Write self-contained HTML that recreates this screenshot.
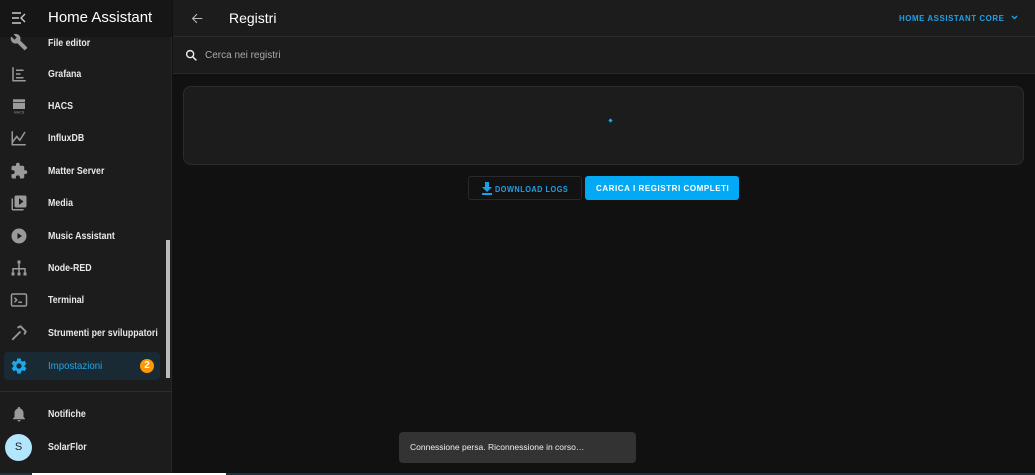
<!DOCTYPE html>
<html><head><meta charset="utf-8"><style>
*{box-sizing:border-box;margin:0;padding:0}
body{width:1035px;height:475px;overflow:hidden;background:#111;font-family:"Liberation Sans",sans-serif;position:relative;color:#e1e1e1}
.sb{position:absolute;left:0;top:0;width:172px;height:475px;background:#1c1c1c;border-right:1px solid #262626}
.sbh{position:absolute;left:0;top:0;width:172px;height:37px;background:#161616;}
.sbh .t{position:absolute;left:48px;top:9px;font-size:15px;color:#fff}
.it{position:absolute;left:0;width:165px;height:28px}
.it svg{position:absolute;left:10px;top:5px;width:18px;height:18px}
.it span{position:absolute;left:48px;top:8px;font-size:10.5px;font-weight:bold;color:#e8e8e8;white-space:nowrap;transform:scaleX(.84);transform-origin:left center}
.act{left:4px;width:156px;background:#1a2a35;border-radius:4px}
.act svg{left:6px}.act span{left:44px;color:#1ea7ea;font-weight:normal;transform:scaleX(.92)}
.badge{position:absolute;right:6px;top:7px;width:14px;height:14px;border-radius:50%;background:#ff9800;color:#fff;font-size:10px;text-align:center;line-height:14px;font-weight:bold}
.scroll{position:absolute;left:166px;top:240px;width:4px;height:138px;background:#bbb}
.div{position:absolute;left:0;top:391px;width:172px;height:1px;background:#2e2e2e}
.av{position:absolute;left:5px;top:434px;width:27px;height:27px;border-radius:50%;background:#b3e5fc;color:#222;font-size:11px;text-align:center;line-height:27px}
.hdr{position:absolute;left:173px;top:0;right:0;height:37px;background:#1c1c1c;border-bottom:1px solid #2a2a2a}
.srch{position:absolute;left:173px;top:37px;right:0;height:37px;background:#1c1c1c;border-bottom:1px solid #2a2a2a}
.card{position:absolute;left:183px;top:86px;width:841px;height:79px;background:#1c1c1c;border:1px solid #2c2c2c;border-radius:8px}
.btn{position:absolute;top:176px;height:24px;font-size:8.5px;font-weight:bold;letter-spacing:.6px;line-height:24px;border-radius:3px}
.sx{display:inline-block;transform-origin:left center}
.toast{position:absolute;left:399px;top:432px;width:237px;height:31px;background:#333;border-radius:4px;font-size:8.5px;color:#eee;line-height:31px;padding-left:11px}
</style></head><body>
<div class="sb">
<div class="sbh">
<svg style="position:absolute;left:12px;top:12px" width="14" height="12" viewBox="0 0 14 12"><path d="M0 1h9M0 6h7M0 11h9M13 2l-4 4 4 4" stroke="#ccc" stroke-width="1.4" fill="none"/></svg>
<div class="t">Home Assistant</div></div>
<div class="it" style="top:28px"><svg viewBox="0 0 24 24"><path fill="#9a9a9a" d="M22.7 19l-9.1-9.1c.9-2.3.4-5-1.5-6.9-2-2-5-2.4-7.4-1.3L9 6 6 9 1.6 4.7C.4 7.1.9 10.1 2.9 12.1c1.9 1.9 4.6 2.4 6.9 1.5l9.1 9.1c.4.4 1 .4 1.4 0l2.3-2.3c.5-.4.5-1.1.1-1.4z"/></svg><span style="top:9px">File editor</span></div>
<div class="it" style="top:60px"><svg viewBox="0 0 24 24"><path d="M4 3v18h17M8 7h10M8 12h6M8 17h10" stroke="#9a9a9a" stroke-width="2" fill="none"/></svg><span>Grafana</span></div>
<div class="it" style="top:92px"><svg viewBox="0 0 24 24"><path fill="#9a9a9a" d="M4 3h16v4H4zM4 8h16v8H4z"/><text x="12" y="22" font-size="5" fill="#9a9a9a" text-anchor="middle" font-family="Liberation Sans">HACS</text></svg><span>HACS</span></div>
<div class="it" style="top:124px"><svg viewBox="0 0 24 24"><path d="M3 3v18h18M3 18l6-8 4 5 7-11" stroke="#9a9a9a" stroke-width="2" fill="none"/></svg><span>InfluxDB</span></div>
<div class="it" style="top:157px"><svg viewBox="0 0 24 24"><path fill="#9a9a9a" d="M20.5 11H19V7c0-1.1-.9-2-2-2h-4V3.5a2.5 2.5 0 00-5 0V5H4c-1.1 0-2 .9-2 2v3.8h1.5a2.7 2.7 0 010 5.4H2V20c0 1.1.9 2 2 2h3.8v-1.5a2.7 2.7 0 015.4 0V22H17c1.1 0 2-.9 2-2v-4h1.5a2.5 2.5 0 000-5z"/></svg><span>Matter Server</span></div>
<div class="it" style="top:189px"><svg viewBox="0 0 24 24"><path fill="#9a9a9a" d="M4 6H2v14c0 1.1.9 2 2 2h14v-2H4zm16-4H8c-1.1 0-2 .9-2 2v12c0 1.1.9 2 2 2h12c1.1 0 2-.9 2-2V4c0-1.1-.9-2-2-2zm-8 12.5v-9l6 4.5z"/></svg><span>Media</span></div>
<div class="it" style="top:222px"><svg viewBox="0 0 24 24"><circle cx="12" cy="12" r="10" fill="#9a9a9a"/><path d="M10 8v8l6-4z" fill="#1c1c1c"/></svg><span>Music Assistant</span></div>
<div class="it" style="top:254px"><svg viewBox="0 0 24 24"><path fill="#9a9a9a" d="M10 2h4v4h-4zM2 18h4v4H2zM10 18h4v4h-4zM18 18h4v4h-4z"/><path d="M12 6v12M4 18v-5h16v5" stroke="#9a9a9a" stroke-width="2" fill="none"/></svg><span>Node-RED</span></div>
<div class="it" style="top:286px"><svg viewBox="0 0 24 24"><rect x="2" y="4" width="20" height="16" rx="2" stroke="#9a9a9a" stroke-width="2" fill="none"/><path d="M6 9l3 3-3 3M11 15h5" stroke="#9a9a9a" stroke-width="2" fill="none"/></svg><span>Terminal</span></div>
<div class="it" style="top:319px"><svg viewBox="0 0 24 24"><path d="M3 21l11-11M10 5l4-2 7 7-2 4" stroke="#9a9a9a" stroke-width="2.5" fill="none"/></svg><span>Strumenti per sviluppatori</span></div>
<div class="it act" style="top:352px"><svg viewBox="0 0 24 24"><path fill="#1ea7ea" d="M12 15.5A3.5 3.5 0 1112 8.5a3.5 3.5 0 010 7zm7.4-2.5c0-.3.1-.7.1-1s0-.7-.1-1l2.1-1.6c.2-.2.2-.4.1-.6l-2-3.5c-.1-.2-.4-.3-.6-.2l-2.5 1c-.5-.4-1.1-.7-1.7-1L14.5 2.4c0-.2-.2-.4-.5-.4h-4c-.3 0-.5.2-.5.4l-.4 2.7c-.6.2-1.1.6-1.7 1l-2.5-1c-.2-.1-.5 0-.6.2l-2 3.5c-.1.2-.1.5.1.6L4.6 11c0 .3-.1.7-.1 1s0 .7.1 1l-2.1 1.6c-.2.2-.2.4-.1.6l2 3.5c.1.2.4.3.6.2l2.5-1c.5.4 1.1.7 1.7 1l.4 2.7c0 .2.2.4.5.4h4c.3 0 .5-.2.5-.4l.4-2.7c.6-.2 1.1-.6 1.7-1l2.5 1c.2.1.5 0 .6-.2l2-3.5c.1-.2.1-.5-.1-.6z"/></svg><span>Impostazioni</span><div class="badge">2</div></div>
<div class="scroll"></div>
<div class="div"></div>
<div class="it" style="top:400px"><svg viewBox="0 0 24 24"><path fill="#9a9a9a" d="M12 22a2 2 0 002-2h-4a2 2 0 002 2zm6-6v-5c0-3.1-1.6-5.6-4.5-6.3V4a1.5 1.5 0 00-3 0v.7C7.6 5.4 6 7.9 6 11v5l-2 2v1h16v-1z"/></svg><span>Notifiche</span></div>
<div class="av">S</div>
<div class="it" style="top:433px"><span>SolarFlor</span></div>
</div>
<div class="hdr">
<svg style="position:absolute;left:18px;top:12px" width="13" height="13" viewBox="0 0 24 24"><path d="M21 12H4M11 4l-8 8 8 8" stroke="#bbb" stroke-width="2" fill="none"/></svg>
<div style="position:absolute;left:56px;top:10px;font-size:14px;color:#fff">Registri</div>
<div style="position:absolute;left:726px;top:13px;font-size:8.5px;font-weight:bold;letter-spacing:.6px;color:#1ea0e8;transform:scaleX(.93);transform-origin:left center;white-space:nowrap">HOME ASSISTANT CORE</div>
<svg style="position:absolute;right:17px;top:15px" width="7" height="5" viewBox="0 0 7 5"><path d="M1 1l2.5 2.5L6 1" stroke="#1ea0e8" stroke-width="1.4" fill="none"/></svg>
</div>
<div class="srch">
<svg style="position:absolute;left:12px;top:12px" width="13" height="13" viewBox="0 0 24 24"><circle cx="9.5" cy="9.5" r="6.5" stroke="#eee" stroke-width="2.6" fill="none"/><path d="M14.5 14.5L21 21" stroke="#eee" stroke-width="2.8"/></svg>
<div style="position:absolute;left:32px;top:13px;font-size:10px;color:#aaa">Cerca nei registri</div>
</div>
<div class="card"><div style="position:absolute;left:425px;top:32px;width:3px;height:3px;background:#1ea7ea;transform:rotate(45deg)"></div></div>
<div class="btn" style="left:468px;width:114px;border:1px solid #2a2a2a;background:#121212;color:#1ea0e8;padding-left:26px;white-space:nowrap"><span class="sx" style="transform:scaleX(.86)">DOWNLOAD LOGS</span>
<svg style="position:absolute;left:13px;top:5px" width="10" height="13" viewBox="0 0 10 13"><path d="M3 0h4v5h3L5 10 0 5h3zM0 11h10v2H0z" fill="#1ea0e8"/></svg></div>
<div class="btn" style="left:585px;width:154px;background:#03a9f4;color:#fff;padding-left:11px;white-space:nowrap"><span class="sx" style="transform:scaleX(.94)">CARICA I REGISTRI COMPLETI</span></div>
<div class="toast">Connessione persa. Riconnessione in corso…</div>
<div style="position:absolute;left:0;top:473px;width:1035px;height:2px;background:#1d3440"></div>
<div style="position:absolute;left:32px;top:473px;width:194px;height:2px;background:#fff"></div>
</body></html>
